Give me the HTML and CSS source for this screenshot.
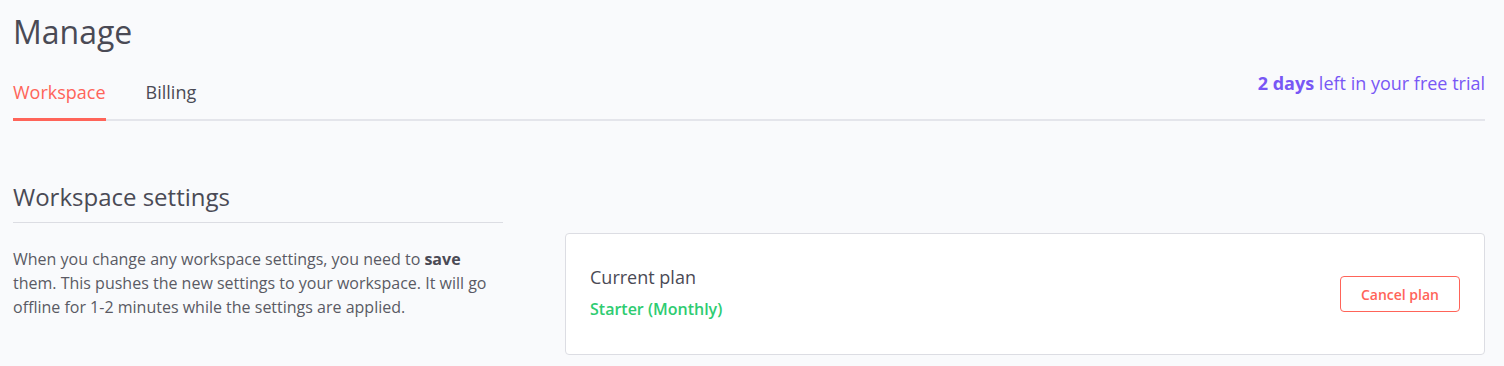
FILE: index.html
```html
<!DOCTYPE html>
<html>
<head lang="en">
    <meta charset="utf-8">
    <title>Manage</title>
    <link rel="stylesheet" href="styles.css">
</head>
<body>
<main class="page">
    <h1 class="page-title">Manage</h1>
    <nav class="tabs">
        <a class="tab active">Workspace</a>
        <a class="tab">Billing</a>
        <span class="trial"><strong>2 days</strong> left in your free trial</span>
    </nav>
    <section class="settings">
        <div class="settings-info">
            <h2 class="section-title">Workspace settings</h2>
            <p class="section-text">When you change any workspace settings, you need to <strong>save</strong> them. This pushes the new settings to your workspace. It will go offline for 1-2 minutes while the settings are applied.</p>
        </div>
        <div class="card">
            <div class="plan">
                <div class="plan-label">Current plan</div>
                <div class="plan-name">Starter (Monthly)</div>
            </div>
            <button class="btn-cancel">Cancel plan</button>
        </div>
    </section>
</main>
</body>
</html>
```

FILE: styles.css
```css
body {
    margin: 0;
    background-color: #f9fafc;
    font-family: "Open Sans", sans-serif;
    color: #4a4a55;
}

.page {
    padding: 0 19px 0 13px;
}

.page-title {
    margin: 0;
    padding-top: 11px;
    font-size: 32px;
    font-weight: 400;
    line-height: 42px;
}

.tabs {
    display: flex;
    align-items: flex-end;
    margin-top: 27px;
    border-bottom: 2px solid #e4e5eb;
}

.tab {
    font-size: 18px;
    line-height: 24px;
    padding-bottom: 14px;
    margin-right: 40px;
    margin-bottom: -2px;
    border-bottom: 3px solid transparent;
    color: #4a4a55;
}

.tab.active {
    color: #ff6459;
    border-bottom-color: #ff6459;
}

.trial {
    margin-left: auto;
    align-self: flex-start;
    margin-top: -9px;
    font-size: 18px;
    color: #7857f5;
}

.trial strong {
    font-weight: 700;
}

.settings {
    display: grid;
    grid-template-columns: 490px 1fr;
    column-gap: 62px;
    margin-top: 60px;
}

.section-title {
    margin: 0;
    padding-bottom: 9px;
    font-size: 24px;
    font-weight: 400;
    line-height: 32px;
    border-bottom: 1px solid #dcdde3;
}

.section-text {
    margin: 24px 0 0;
    font-size: 16px;
    line-height: 24px;
    color: #5a5a64;
}

.section-text strong {
    font-weight: 700;
    color: #4a4a55;
}

.card {
    display: flex;
    align-items: center;
    justify-content: space-between;
    margin-top: 52px;
    padding: 28px 24px 28px 24px;
    background-color: #fff;
    border: 1px solid #dcdde3;
    border-radius: 4px;
}

.plan-label {
    font-size: 18px;
    line-height: 30px;
}

.plan-name {
    font-size: 16px;
    font-weight: 600;
    line-height: 34px;
    color: #2ecc71;
}

.btn-cancel {
    font-family: "Open Sans", sans-serif;
    font-size: 14px;
    font-weight: 600;
    color: #ff6459;
    background: #fff;
    border: 1px solid #ff6459;
    border-radius: 4px;
    padding: 0 20px;
    height: 36px;
}
```
